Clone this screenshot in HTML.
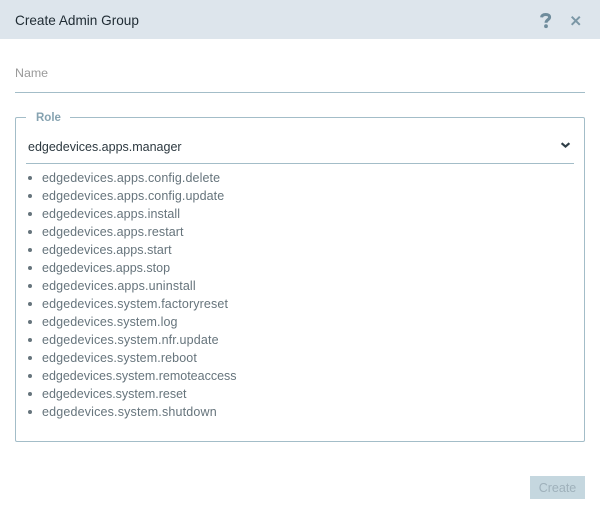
<!DOCTYPE html>
<html><head><meta charset="utf-8">
<style>
html,body{margin:0;padding:0;background:#fff}
body{width:600px;height:506px;position:relative;overflow:hidden;font-family:"Liberation Sans",sans-serif}
.a{position:absolute;white-space:nowrap}
.li{position:absolute;left:42px;font-size:12.5px;line-height:18px;color:#66747c;white-space:nowrap}
.d{position:absolute;left:28px;width:4px;height:4px;border-radius:50%;background:#66747c}
</style></head><body>
<div class="a" style="left:0;top:0;width:600px;height:39px;background:#dde5ec"></div>
<div class="a" style="left:15px;top:12px;font-size:13.6px;line-height:18px;color:#1f2b33">Create Admin Group</div>
<svg class="a" style="left:535px;top:10px" width="50" height="22" viewBox="0 0 50 22">
<path d="M6.6 7.4C6.8 5 8.6 4.5 10.8 4.5C13.2 4.5 14.6 5.5 14.6 7.2C14.6 9.6 11 9.8 11 12.8" fill="none" stroke="#6f8c9c" stroke-width="3"/>
<circle cx="11" cy="16.2" r="1.9" fill="#6f8c9c"/>
<path d="M36.7 6.7L44.8 14.8M44.8 6.7L36.7 14.8" stroke="#7b97a6" stroke-width="2" fill="none"/>
</svg>
<div class="a" style="left:15px;top:64px;font-size:12.4px;line-height:18px;color:#9a9a9a">Name</div>
<div class="a" style="left:15px;top:92px;width:570px;height:1px;background:#a3bdc8"></div>
<div class="a" style="left:15px;top:117px;width:568px;height:323px;border:1px solid #a3bdc8;border-radius:2px"></div>
<div class="a" style="left:26px;top:110px;width:44px;height:14px;background:#fff"></div>
<div class="a" style="left:36px;top:109px;font-size:11.5px;line-height:18px;font-weight:bold;color:#86a3b1">Role</div>
<div class="a" style="left:28px;top:138px;font-size:12.5px;line-height:18px;color:#2d3940">edgedevices.apps.manager</div>
<svg class="a" style="left:558px;top:140px" width="14" height="10" viewBox="0 0 14 10"><path d="M3.6 3.2L7.5 6.6L11.4 3.2" fill="none" stroke="#2f3e47" stroke-width="2.2"/></svg>
<div class="a" style="left:26px;top:163px;width:548px;height:1px;background:#a3bdc8"></div>
<i class="d" style="top:176px"></i><div class="li" style="top:169px;letter-spacing:.1px">edgedevices.apps.config.delete</div>
<i class="d" style="top:194px"></i><div class="li" style="top:187px;letter-spacing:.1px">edgedevices.apps.config.update</div>
<i class="d" style="top:212px"></i><div class="li" style="top:205px;letter-spacing:.08px">edgedevices.apps.install</div>
<i class="d" style="top:230px"></i><div class="li" style="top:223px;letter-spacing:.08px">edgedevices.apps.restart</div>
<i class="d" style="top:248px"></i><div class="li" style="top:241px;letter-spacing:.05px">edgedevices.apps.start</div>
<i class="d" style="top:266px"></i><div class="li" style="top:259px;letter-spacing:.01px">edgedevices.apps.stop</div>
<i class="d" style="top:284px"></i><div class="li" style="top:277px;letter-spacing:.14px">edgedevices.apps.uninstall</div>
<i class="d" style="top:302px"></i><div class="li" style="top:295px;letter-spacing:.13px">edgedevices.system.factoryreset</div>
<i class="d" style="top:320px"></i><div class="li" style="top:313px;letter-spacing:.1px">edgedevices.system.log</div>
<i class="d" style="top:338px"></i><div class="li" style="top:331px;letter-spacing:.15px">edgedevices.system.nfr.update</div>
<i class="d" style="top:356px"></i><div class="li" style="top:349px;letter-spacing:.11px">edgedevices.system.reboot</div>
<i class="d" style="top:374px"></i><div class="li" style="top:367px">edgedevices.system.remoteaccess</div>
<i class="d" style="top:392px"></i><div class="li" style="top:385px">edgedevices.system.reset</div>
<i class="d" style="top:410px"></i><div class="li" style="top:403px;letter-spacing:.17px">edgedevices.system.shutdown</div>
<div class="a" style="left:530px;top:476px;width:55px;height:23px;background:#c5d7df;color:#9fb1bb;font-size:12.5px;line-height:24px;text-align:center">Create</div>
</body></html>
